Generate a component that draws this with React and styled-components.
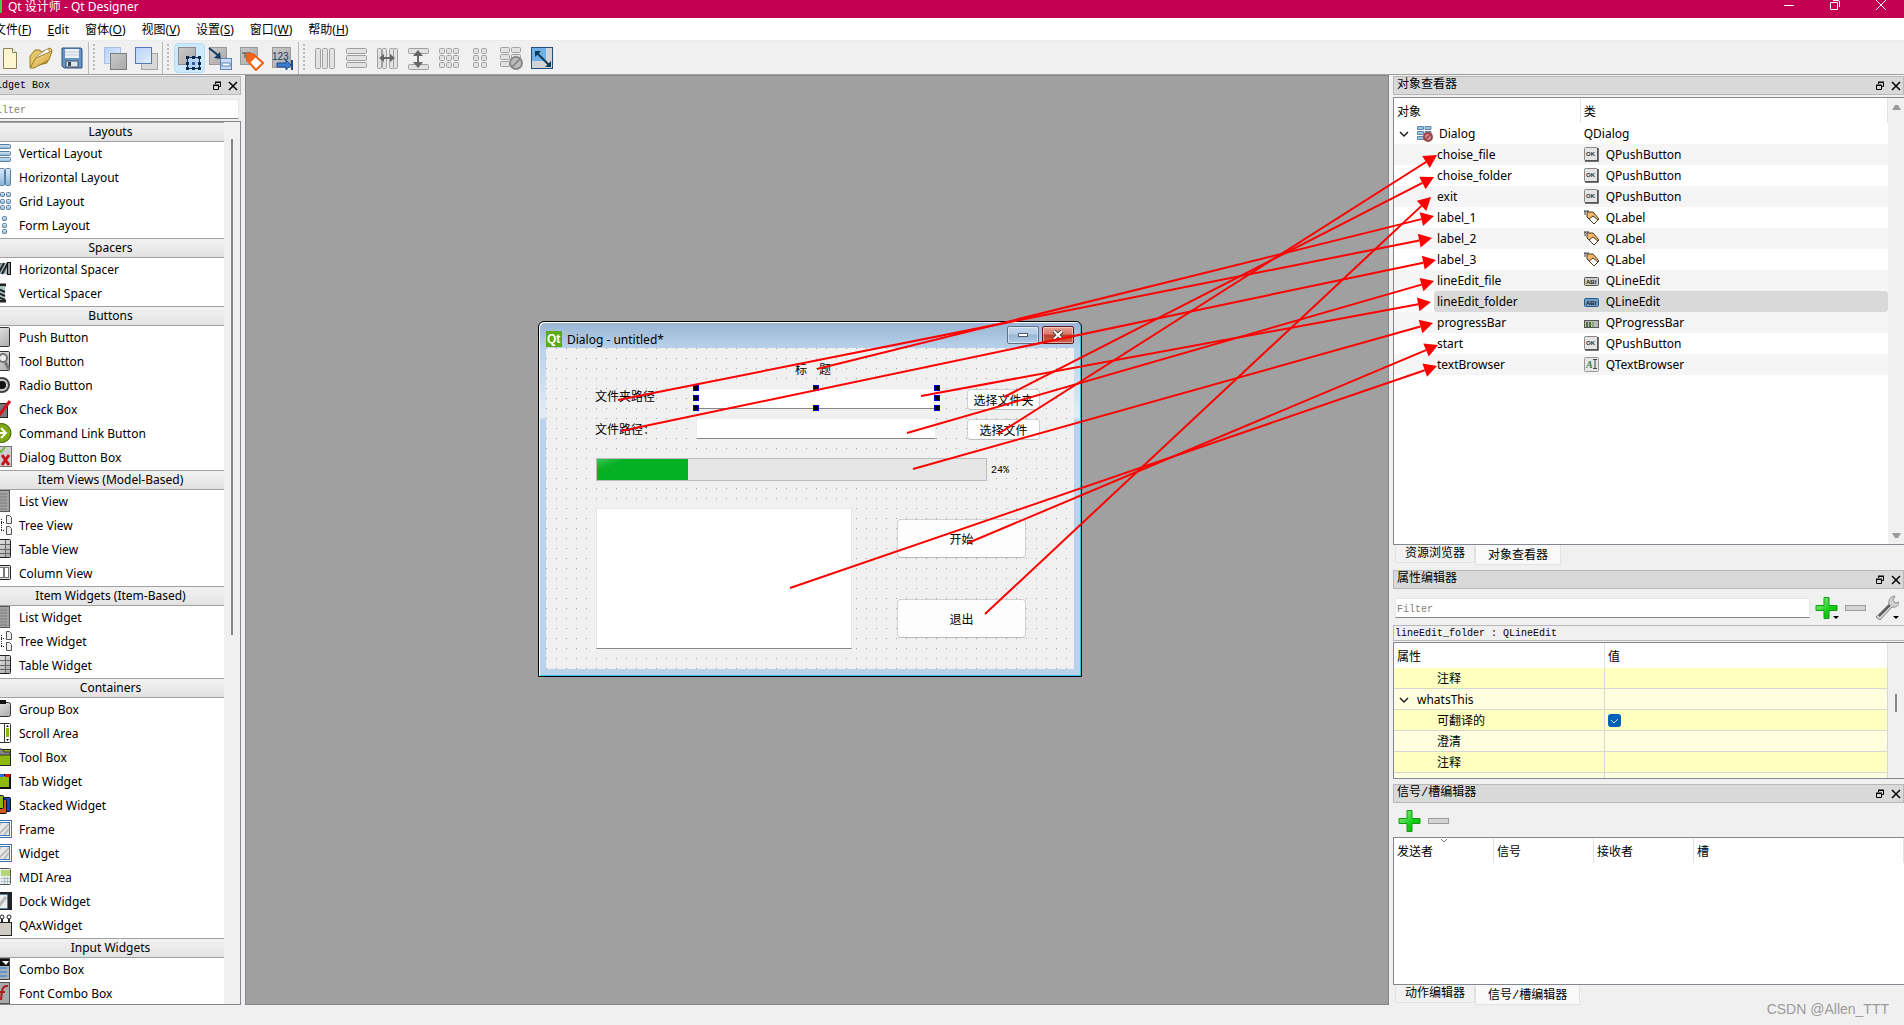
import React, { useState } from 'react';
import styled, { createGlobalStyle, css } from 'styled-components';

const GlobalStyle = createGlobalStyle`
  * {
    box-sizing: border-box;
  }

  body {
    margin: 0;
    background-color: #f0f0f0;
    color: #000;
    font-family: "Noto Sans", "Noto Sans CJK SC", sans-serif;
    font-size: 12px;
    overflow: hidden;
  }

  button, input {
    font-family: inherit;
    font-size: inherit;
    color: inherit;
  }
`;

const mono = css`
  font-family: "Liberation Mono", "Noto Sans CJK SC", monospace;
`;

const Screen = styled.div`
  position: relative;
  height: 100vh;
  overflow: hidden;
`;

/* The window is pushed a little past the left edge of the screen */
const MainWindow = styled.div`
  display: flex;
  flex-direction: column;
  height: 100%;
  margin-left: -12px;
`;

const TitleBar = styled.header`
  display: flex;
  justify-content: space-between;
  height: 18px;
  flex-shrink: 0;
  background-color: #c40052;
  color: #fff;
`;

const WindowTitle = styled.div`
  display: flex;
  gap: 6px;
  line-height: 14px;
`;

const WindowControls = styled.div`
  display: flex;
`;

const WindowControl = styled.button`
  width: 46px;
  height: 18px;
  padding: 0 0 8px;
  border: 0;
  background: none;
  display: flex;
  align-items: center;
  justify-content: center;
`;

const MenuBar = styled.nav`
  display: flex;
  align-items: center;
  gap: 16px;
  height: 23px;
  flex-shrink: 0;
  padding: 2px 0 0 6px;
  background-color: #fff;
  border-bottom: 1px solid #ececec;
`;

const MenuItem = styled.button`
  border: 0;
  padding: 0;
  background: none;
  line-height: 18px;
`;

const ToolBar = styled.div`
  display: flex;
  align-items: center;
  height: 34px;
  flex-shrink: 0;
  padding: 1px 0 0 7px;
  border-bottom: 1px solid #a0a0a0;
`;

const ToolButton = styled.button`
  width: 31px;
  height: 30px;
  padding: 0;
  display: flex;
  align-items: center;
  justify-content: center;
  border: 1px solid ${(p) => (p.$active ? '#b5def8' : 'transparent')};
  background-color: ${(p) => (p.$active ? '#cce8fb' : 'transparent')};
  border-radius: 4px;
`;

const ToolSeparator = styled.div`
  width: 12px;
  height: 32px;
  padding: 2px 0 2px 4px;
  border-left: 1px solid #b8b8b8;

  &::after {
    content: '';
    display: block;
    width: 2px;
    height: 28px;
    background-image: linear-gradient(#bbb 50%, transparent 50%);
    background-size: 2px 4px;
  }
`;

const Body = styled.div`
  display: flex;
  flex: 1;
  min-height: 0;
`;

const LeftDock = styled.aside`
  width: 253px;
  flex-shrink: 0;
  display: flex;
  flex-direction: column;
  padding-top: 1px;
  margin-right: 4px;
`;

const RightDock = styled.aside`
  width: 511px;
  flex-shrink: 0;
  display: flex;
  flex-direction: column;
  padding-top: 1px;
  margin-left: 4px;
`;

const MdiArea = styled.main`
  flex: 1;
  position: relative;
  min-width: 0;
  background-color: #a0a0a0;
  border: 1px solid #828790;
`;

const DockTitle = styled.div`
  display: flex;
  align-items: center;
  justify-content: space-between;
  height: 19px;
  flex-shrink: 0;
  padding: 0 2px 0 ${(p) => (p.$latin ? 1 : 3)}px;
  border: 1px solid #b8b8b8;
  background-color: #d9d9d9;
  ${mono}
  font-size: ${(p) => (p.$latin ? 10 : 12)}px;
  line-height: 17px;
`;

const DockButtons = styled.div`
  display: flex;
  gap: 6px;
`;

const DockButton = styled.button`
  width: 10px;
  height: 10px;
  padding: 0;
  border: 0;
  background: none;
  display: flex;
`;

const FilterInput = styled.input`
  flex: 1;
  min-width: 0;
  height: 20px;
  padding: 2px 1px 0;
  border: 1px solid #e8e8e8;
  border-bottom: 1px solid #868686;
  background-color: #fff;
  ${mono}
  font-size: 10px;
  outline: 0;

  &::placeholder {
    color: #808080;
  }
`;

const FilterRow = styled.div`
  display: flex;
  padding: 4px 2px 2px 0;
`;

const WidgetFrame = styled.div`
  display: flex;
  flex: 1;
  min-height: 0;
  border: 1px solid #828790;
  overflow: hidden;
`;

const WidgetList = styled.div`
  flex: 1;
  background-color: #fff;
`;

const CategoryTitle = styled.h2`
  height: 20px;
  margin: 0;
  padding-left: 8px;
  border-top: 1px solid #a0a0a0;
  border-bottom: 1px solid #a0a0a0;
  background: linear-gradient(#f2f2f2, #e2e2e2);
  font-size: 12px;
  font-weight: 400;
  line-height: 18px;
  text-align: center;
`;

const WidgetItem = styled.div`
  display: flex;
  align-items: center;
  gap: 6px;
  height: 24px;
  padding-bottom: 2px;
`;

const ScrollTrack = styled.div`
  width: 16px;
  flex-shrink: 0;
  display: flex;
  justify-content: center;
  padding: ${(p) => (p.$top ? p.$top : 0)}px 0;
  background-color: #f0f0f0;
`;

const ScrollThumb = styled.div`
  width: 2px;
  height: ${(p) => p.$height};
  background-color: #868686;
`;

const ScrollArrows = styled(ScrollTrack)`
  flex-direction: column;
  justify-content: space-between;
  align-items: center;
  padding: 6px 0 5px;
`;

const Frame = styled.div`
  display: flex;
  align-items: stretch;
  flex: ${(p) => (p.$height ? 'none' : '1')};
  height: ${(p) => (p.$height ? p.$height + 'px' : 'auto')};
  min-height: 0;
  margin-top: ${(p) => p.$gap || 0}px;
  border: 1px solid #828790;
  border-right: 0;
  background-color: #fff;
  overflow: hidden;
`;

const TableArea = styled.div`
  flex: 1;
  min-width: 0;
`;

const Table = styled.table`
  width: 100%;
  table-layout: fixed;
  border-collapse: separate;
  border-spacing: 0;

  th {
    height: 25px;
    padding: 0 0 0 3px;
    border-right: 1px solid #e2e2e2;
    background-color: #fff;
    font-weight: 400;
    text-align: left;
    position: relative;
  }

  td {
    height: 21px;
    padding: 0;
    white-space: nowrap;
    line-height: 20px;
  }
`;

const ObjectRow = styled.tr`
  background-color: ${(p) => (p.$odd ? '#f5f5f5' : '#fff')};
`;

const ObjectName = styled.div`
  display: flex;
  align-items: center;
  height: 21px;
  margin-left: ${(p) => (p.$root ? 5 : 40)}px;
  padding-left: ${(p) => (p.$root ? 0 : 3)}px;
  gap: 6px;
  border-radius: 3px 0 0 3px;
  background-color: ${(p) => (p.$selected ? '#d9d9d9' : 'transparent')};
`;

const ClassName = styled.div`
  display: flex;
  align-items: center;
  gap: 7px;
  height: 21px;
  padding-left: 3px;
  border-radius: 0 3px 3px 0;
  background-color: ${(p) => (p.$selected ? '#d9d9d9' : 'transparent')};
`;

const Expander = styled.button`
  width: 10px;
  height: 10px;
  padding: 0;
  border: 0;
  background: none;
  display: flex;
  margin-right: ${(p) => p.$gap || 0}px;
`;

const PropertyRow = styled.tr`
  background-color: ${(p) => (p.$strong ? '#ffffbf' : '#ffffdf')};

  td {
    border-right: 1px solid #d6d6d6;
    border-bottom: 1px solid #d6d6d6;
  }
`;

const PropertyName = styled.div`
  display: flex;
  align-items: center;
  height: 20px;
  padding-top: 2px;
  padding-left: ${(p) => (p.$group ? 5 : 43)}px;
`;

const CheckHolder = styled.label`
  display: grid;
  justify-content: start;
  padding-left: 3px;

  > * {
    grid-area: 1 / 1;
  }

  svg {
    z-index: 1;
    pointer-events: none;
  }
`;

const CheckBox = styled.input`
  appearance: none;
  display: block;
  width: 13px;
  height: 13px;
  margin: 0;
  border-radius: 3px;
  background-color: #e5e5e5;

  &:checked {
    background-color: #005fb8;
  }
`;

const Tabs = styled.div`
  display: flex;
  align-items: flex-start;
  height: 20px;
  flex-shrink: 0;
  padding-left: 2px;
`;

const Tab = styled.button`
  height: ${(p) => (p.$active ? 20 : 18)}px;
  padding: ${(p) => (p.$active ? '3px 12px 0' : '2px 9px 0')};
  border: 1px solid #e2e2e2;
  border-top: 0;
  background-color: ${(p) => (p.$active ? '#f9f9f9' : '#f2f2f2')};
  ${mono}
  line-height: 15px;
`;

const PropertyTools = styled.div`
  display: flex;
  align-items: center;
  gap: 4px;
  height: 36px;
  padding: 2px 2px 0;
  flex-shrink: 0;
`;

const SignalTools = styled.div`
  display: flex;
  align-items: center;
  gap: 5px;
  height: 34px;
  padding: 2px 0 0 5px;
  flex-shrink: 0;
`;

const IconButton = styled.button`
  width: ${(p) => p.$width || 24}px;
  height: 24px;
  padding: 0;
  border: 0;
  background: none;
  display: flex;
  align-items: center;
  justify-content: center;
`;

const ObjectLabel = styled.div`
  height: 16px;
  flex-shrink: 0;
  padding: 1px 0 0 1px;
  border: 1px solid #b8b8b8;
  border-right: 0;
  ${mono}
  font-size: 10px;
  line-height: 14px;
`;

const DockGap = styled.div`
  height: 5px;
  flex-shrink: 0;
`;

const StatusBar = styled.footer`
  height: 20px;
  flex-shrink: 0;
`;

const Watermark = styled.div`
  position: absolute;
  right: 15px;
  bottom: 6px;
  color: #9b9b9b;
  font-family: "Liberation Sans", Arial, sans-serif;
  font-size: 14px;
  line-height: 20px;
`;

/* Form window on the design canvas */
const FormWindow = styled.section`
  position: absolute;
  left: 292px;
  top: 245px;
  width: 544px;
  border: 1px solid #000;
  border-radius: 6px 6px 0 0;
  background: linear-gradient(#98b4d2, #b9d1ea 26px, #e2ecf7 95px, #b9d1ea 98px);
  box-shadow: inset 1px 1px 0 #fff, inset -1px -1px 0 #34c6e0;
  padding: 0 7px 7px;
`;

const FormTitle = styled.div`
  display: flex;
  align-items: center;
  height: 26px;
  padding-top: 8px;
  gap: 5px;
`;

const FormTitleButtons = styled.div`
  display: flex;
  gap: 3px;
  margin-left: auto;
  margin-top: -8px;
`;

const FormTitleButton = styled.button`
  width: 32px;
  height: 18px;
  padding: 0;
  display: flex;
  align-items: center;
  justify-content: center;
  border: 1px solid ${(p) => (p.$close ? '#5e1a1a' : '#5c7089')};
  border-radius: 2px;
  background: ${(p) =>
    p.$close
      ? 'linear-gradient(#e8a196, #d8796b 45%, #bb3c26 50%, #cc6450)'
      : 'linear-gradient(#c3d6ea, #b3cae3 45%, #97b5d4 50%, #b4cde6)'};
  box-shadow: inset 0 0 0 1px rgba(255, 255, 255, 0.45);
`;

const FormCanvas = styled.div`
  position: relative;
  height: 321px;
  background-color: #f0f0f0;
  background-image: conic-gradient(at 1px 1px, transparent 75%, #a0a0a4 0);
  background-size: 10px 10px;
`;

const place = css`
  position: absolute;
  left: ${(p) => p.$x}px;
  top: ${(p) => p.$y}px;
  width: ${(p) => (p.$w ? p.$w + 'px' : 'auto')};
  height: ${(p) => (p.$h ? p.$h + 'px' : 'auto')};
`;

const FormLabel = styled.label`
  ${place}
  ${mono}
  line-height: 20px;
  white-space: pre;
`;

const FormInput = styled.input`
  ${place}
  padding: 0 4px;
  border: 1px solid #ececec;
  border-bottom: 1px solid #868686;
  background-color: #fff;
`;

const FormText = styled.textarea`
  ${place}
  resize: none;
  border: 1px solid #e6e6e6;
  border-bottom: 1px solid #868686;
  background-color: #fff;
`;

const FormButton = styled.button`
  ${place}
  ${mono}
  padding: 0;
  border: 1px solid #d0d0d0;
  border-bottom-color: #bcbcbc;
  border-radius: 4px;
  background-color: #fdfdfd;
  white-space: nowrap;
`;

const ProgressTrack = styled.div`
  ${place}
  border: 1px solid #bcbcbc;
  background-color: #e6e6e6;
`;

const ProgressChunk = styled.div`
  height: 100%;
  background: linear-gradient(160deg, #3cc453, #06b025 22%);
`;

const ProgressText = styled.span`
  ${place}
  ${mono}
  font-size: 10px;
  line-height: 20px;
`;

const Handle = styled.i`
  ${place}
  width: 6px;
  height: 6px;
  border: 1px solid #0000c8;
  background-color: #000;
`;

const ArrowLayer = styled.svg`
  position: absolute;
  left: 0;
  top: 0;
  pointer-events: none;
`;

const HeaderMark = styled.svg`
  position: absolute;
  left: 46px;
  top: 1px;
`;

const HiddenDefs = styled.svg`
  position: absolute;
  width: 0;
  height: 0;
`;

const Defs = () => (
  <HiddenDefs aria-hidden="true">
    <defs>
      <linearGradient id="grey" x1="0" y1="0" x2="1" y2="1">
        <stop offset="0" stopColor="#f2f2f2" />
        <stop offset="1" stopColor="#a9a9a9" />
      </linearGradient>
      <linearGradient id="tile" x1="0" y1="0" x2="1" y2="1">
        <stop offset="0" stopColor="#c9c9c9" />
        <stop offset="1" stopColor="#a9a9a9" />
      </linearGradient>
      <linearGradient id="blue" x1="0" y1="0" x2="1" y2="1">
        <stop offset="0" stopColor="#b4d2fb" />
        <stop offset="1" stopColor="#e3eefd" />
      </linearGradient>
      <linearGradient id="bar" x1="0" y1="0" x2="0" y2="1">
        <stop offset="0" stopColor="#d9ecfa" />
        <stop offset="1" stopColor="#87b3d8" />
      </linearGradient>
      <linearGradient id="green" x1="0" y1="0" x2="1" y2="1">
        <stop offset="0" stopColor="#9cf39c" />
        <stop offset="0.6" stopColor="#12cf12" />
        <stop offset="1" stopColor="#05b505" />
      </linearGradient>
      <linearGradient id="gold" x1="0" y1="0" x2="1" y2="1">
        <stop offset="0" stopColor="#fae8a8" />
        <stop offset="1" stopColor="#cf9a28" />
      </linearGradient>
    </defs>
  </HiddenDefs>
);

const ToolIcon = ({ name }) => {
  const bar = { fill: '#e2e2e2', stroke: '#a0a0a0' };
  const shapes = {
    new: (
      <>
        <path d="M5.500 2.500h9l4 4v16h-13z" fill="#fdf8cf" stroke="#8d8158" />
        <path d="M14.500 2.500v4h4" fill="#fff" stroke="#8d8158" />
      </>
    ),
    open: (
      <>
        <path d="M1 21V10l5-6h5l1 2 9-4 2 2-5 13z" fill="#e5c566" stroke="#9c7a22" />
        <path d="M6 12L18 3l3 3-7 9z" fill="#fff" stroke="#aaa" />
        <path d="M1 22L7 12l16-7-3 9L5 22z" fill="url(#gold)" stroke="#9c7a22" />
      </>
    ),
    save: (
      <>
        <path d="M2 2h19l1 1v19H4l-2-2z" fill="#6794c6" stroke="#33557e" />
        <rect x="5" y="3" width="14" height="9" fill="#edf1f6" />
        <path d="M5 6h14M5 9h14" stroke="#c2cfdd" />
        <rect x="6" y="15" width="12" height="6" fill="#dfe5ec" stroke="#456" />
        <rect x="8" y="16" width="3" height="4" fill="#345" />
      </>
    ),
    back: (
      <>
        <rect x="1.500" y="1.500" width="16" height="16" fill="url(#blue)" stroke="#aebfdd" />
        <rect x="7.500" y="7.500" width="16" height="16" fill="url(#tile)" stroke="#7d7d7d" />
      </>
    ),
    front: (
      <>
        <rect x="7.500" y="7.500" width="16" height="16" fill="#d8d8d8" stroke="#a6a6a6" />
        <rect x="1.500" y="1.500" width="16" height="16" fill="url(#blue)" stroke="#5577b5" />
      </>
    ),
    widgets: (
      <>
        <rect x="1.500" y="1.500" width="17" height="17" fill="url(#tile)" stroke="#8c8c8c" />
        <rect x="10.500" y="11.500" width="12" height="11" fill="#b4d2fb" stroke="#14355e" />
        <path d="M9 10h3v3H9zM15 10h3v3h-3zM21 10h3v3h-3zM9 16h3v3H9zM21 16h3v3h-3zM9 21h3v3H9zM15 21h3v3h-3zM21 21h3v3h-3z" fill="#0c2647" />
        <rect x="15" y="16" width="3" height="3" fill="#2d5fa3" />
      </>
    ),
    signals: (
      <>
        <rect x="1.500" y="1.500" width="17" height="17" fill="url(#tile)" stroke="#9a9a9a" />
        <path d="M1 2l10 8" stroke="#173c5d" strokeWidth="2" />
        <path d="M13 13l-1-7-6 6z" fill="#173c5d" />
        <rect x="12.500" y="12.500" width="11" height="11" fill="#c9dcf5" stroke="#5d83b9" />
        <rect x="14" y="17" width="8" height="3" fill="#fff" stroke="#5d83b9" />
      </>
    ),
    buddies: (
      <>
        <rect x="1.500" y="1.500" width="17" height="17" fill="url(#tile)" stroke="#9a9a9a" />
        <path d="M3 7h9M6 7v5" stroke="#444" />
        <path d="M8 8h6l10 9-7 7-9-10z" fill="#fff" stroke="#ee5f14" strokeWidth="2" />
        <path d="M8 8h6l3 3-6 6-3-3z" fill="#f0661c" />
      </>
    ),
    order: (
      <>
        <rect x="2.500" y="1.500" width="18" height="20" fill="url(#tile)" stroke="#9a9a9a" />
        <text x="2" y="14" fontSize="10" fontFamily="Liberation Sans" fill="#153a66">123</text>
        <path d="M7 17h9v-3l5 5-5 5v-3H7z" fill="#3c7fd0" stroke="#1c4c8d" />
        <rect x="21" y="14" width="2" height="10" fill="#1c4c8d" />
      </>
    ),
    hlayout: [2, 9, 16].map((x) => <rect key={x} x={x + 0.5} y="2.500" width="5" height="20" rx="1" {...bar} />),
    vlayout: [2, 9, 16].map((y) => <rect key={y} x="2.500" y={y + 0.5} width="20" height="5" rx="1" {...bar} />),
    hsplit: (
      <>
        {[2, 7, 14, 18].map((x) => (
          <rect key={x} x={x + 0.5} y="2.500" width="4" height="20" rx="1" {...bar} />
        ))}
        <path d="M4 12l5-4v3h6V8l5 4-5 4v-3H9v3z" fill="#666" />
      </>
    ),
    vsplit: (
      <>
        <rect x="2.500" y="2.500" width="20" height="5" rx="1" {...bar} />
        <rect x="2.500" y="18.500" width="20" height="5" rx="1" {...bar} />
        <path d="M12 4l5 6h-4v6h4l-5 6-5-6h4v-6H7z" fill="#666" />
      </>
    ),
    grid: [2, 9, 16].map((y) =>
      [2, 9, 16].map((x) => <rect key={x + '-' + y} x={x + 0.5} y={y + 0.5} width="5" height="5" rx="1" {...bar} />)
    ),
    form: [2, 9, 16].map((y) =>
      [5, 13].map((x) => <rect key={x + '-' + y} x={x + 0.5} y={y + 0.5} width="5" height="5" rx="1" {...bar} />)
    ),
    broken: (
      <>
        {[1, 8, 15].map((y) => (
          <React.Fragment key={y}>
            <rect x="1.500" y={y + 0.5} width="9" height="5" rx="1" {...bar} />
            <rect x="12.500" y={y + 0.5} width="9" height="5" rx="1" {...bar} />
          </React.Fragment>
        ))}
        <circle cx="17" cy="17" r="6" fill="#bdbdbd" stroke="#8a8a8a" strokeWidth="2" />
        <path d="M13 21l8-8" stroke="#8a8a8a" strokeWidth="2" />
      </>
    ),
    adjust: (
      <>
        <rect x="1.500" y="1.500" width="21" height="21" fill="#d3d3d3" stroke="#1d4f80" />
        <rect x="2" y="2" width="14" height="13" fill="#6fb0e6" />
        <path d="M7 7l12 12" stroke="#0d3a55" strokeWidth="2" />
        <path d="M5 5h6l-6 6zM21 21h-6l6-6z" fill="#0d3a55" />
      </>
    ),
  };
  return (
    <svg width="25" height="25" viewBox="0 0 25 25" fill="none" aria-hidden="true">
      {shapes[name]}
    </svg>
  );
};

const WidgetIcon = ({ name }) => {
  const bar = { fill: 'url(#bar)', stroke: '#5d7f9f' };
  const box = <rect x="1.500" y="1.500" width="19" height="19" rx="1" fill="url(#grey)" stroke="#333" />;
  const stripes = (
    <>
      <rect x="1.500" y="2.500" width="21" height="17" fill="#fff" stroke="#3a76bb" />
      <rect x="3.500" y="4.500" width="17" height="13" fill="#e9e9e9" stroke="#3a76bb" />
      <path d="M9 17L20 6M15 17l5-6M5 12l7-7" stroke="#bcbcbc" strokeWidth="2" />
    </>
  );
  const list = (
    <>
      <rect x="1.500" y="0.500" width="19" height="21" fill="#a3a3a3" stroke="#555" />
      <path d="M3 4h15M3 7h15M3 10h15M3 13h15M3 16h15M3 19h15" stroke="#7b7b7b" />
    </>
  );
  const tree = (
    <>
      <path d="M3 3h6M12.500 5v12M12 8.500h4M12 16.500h4" stroke="#222" strokeDasharray="1 1" />
      <path d="M17.500 1.500h3l2 2v6h-5zM17.500 12.500h3l2 2v6h-5z" fill="#eee" stroke="#555" />
    </>
  );
  const table = (
    <>
      <rect x="1.500" y="1.500" width="20" height="18" rx="1" fill="url(#grey)" stroke="#222" />
      <path d="M2 6.500h19M2 11.500h19M2 15.500h19M8.500 2v17M16.500 2v17" stroke="#666" />
    </>
  );
  const shapes = {
    vbox: [2, 9, 15].map((y) => <rect key={y} x="1.500" y={y + 0.5} width="20" height="4" rx="1" {...bar} />),
    hbox: [2, 10, 16].map((x) => <rect key={x} x={x + 0.5} y="2.500" width="5" height="17" rx="1" {...bar} />),
    grid: [2, 9, 15].map((y) => [5, 11, 17].map((x) => <rect key={x + '-' + y} x={x + 0.5} y={y + 0.5} width="4" height="4" rx="1" {...bar} />)),
    form: [2, 9, 15].map((y) => [4, 13].map((x) => <rect key={x + '-' + y} x={x + 0.5} y={y + 0.5} width="4" height="4" rx="1" {...bar} />)),
    hspacer: (
      <>
        <rect x="2" y="5" width="17" height="11" fill="#9fb4bd" />
        <path d="M5 16l6-11M9 16l6-11M13 16l6-11" stroke="#222" strokeWidth="2" />
        <rect x="18.500" y="4.500" width="3" height="12" fill="#999" stroke="#111" />
      </>
    ),
    vspacer: (
      <>
        <path d="M5 3h12M5 19h12" stroke="#222" strokeWidth="3" />
        <rect x="7" y="4" width="9" height="14" fill="#a9c4c1" />
        <path d="M7 6l9 4M7 10l9 4M7 14l9 4" stroke="#222" strokeWidth="2" />
      </>
    ),
    push: (
      <>
        {box}
        <text x="8" y="13" fontSize="8" fontFamily="Liberation Sans">OK</text>
      </>
    ),
    tool: (
      <>
        {box}
        <circle cx="14" cy="8" r="4" fill="#eee" stroke="#777" strokeWidth="2" />
        <path d="M16 12l4 7" stroke="#777" strokeWidth="3" />
      </>
    ),
    radio: (
      <>
        <circle cx="13" cy="11" r="7" fill="#ccc" stroke="#444" strokeWidth="2" />
        <circle cx="13" cy="11" r="4" fill="#111" />
      </>
    ),
    check: (
      <>
        <rect x="3.500" y="5.500" width="15" height="14" fill="#777" stroke="#222" />
        <path d="M6 12l5 4L21 3" stroke="#d3131c" strokeWidth="3" />
      </>
    ),
    command: (
      <>
        <circle cx="12.500" cy="11" r="9.500" fill="#7fa810" stroke="#3d5c00" />
        <path d="M8 11h9M12 6l5 5-5 5" stroke="#fff" strokeWidth="2" />
      </>
    ),
    dialog: (
      <>
        <rect x="1.500" y="0.500" width="21" height="20" fill="#cfcfcf" stroke="#777" />
        <path d="M9 3l3 3 4-5" stroke="#6dbb3b" strokeWidth="2" />
        <path d="M13 9l7 10M20 9l-7 10" stroke="#c9131c" strokeWidth="3" />
      </>
    ),
    list,
    tree,
    table,
    column: (
      <>
        <rect x="1.500" y="3.500" width="20" height="14" rx="1" fill="#ddd" stroke="#222" />
        <rect x="10.500" y="5.500" width="4" height="10" fill="#fff" stroke="#777" />
        <rect x="15.500" y="5.500" width="4" height="10" fill="#fff" stroke="#777" />
      </>
    ),
    group: (
      <>
        <rect x="1.500" y="4.500" width="20" height="14" rx="2" fill="url(#grey)" stroke="#333" />
        <rect x="8" y="2" width="9" height="4" fill="#111" />
      </>
    ),
    scroll: (
      <>
        <rect x="1.500" y="1.500" width="20" height="19" rx="1" fill="#fff" stroke="#333" />
        <path d="M15.500 2v18" stroke="#333" />
        <rect x="17" y="6" width="3" height="9" fill="#8bb618" />
        <path d="M17 5l1.500-2L20 5M17 17l1.500 2 1.500-2" fill="#111" />
      </>
    ),
    toolbox: (
      <>
        <rect x="1.500" y="3.500" width="20" height="16" fill="#8db80e" stroke="#222" />
        <path d="M2 3h11l2 3h6v3H2z" fill="#888" stroke="#333" />
      </>
    ),
    tab: (
      <>
        <rect x="2" y="5" width="19" height="13" fill="#8db80e" stroke="#111" strokeWidth="2" />
        <rect x="10" y="4" width="5" height="3" fill="#2c6fe8" />
        <rect x="16" y="4" width="5" height="3" fill="#d91515" />
      </>
    ),
    stacked: (
      <>
        <rect x="13.500" y="3.500" width="8" height="14" rx="1" fill="#1545c4" stroke="#111" />
        <rect x="8.500" y="5.500" width="9" height="14" rx="1" fill="#d2551a" stroke="#111" />
        <rect x="3.500" y="1.500" width="11" height="13" rx="1" fill="#8db80e" stroke="#111" />
      </>
    ),
    frame: stripes,
    widget: stripes,
    mdi: (
      <>
        <rect x="2.500" y="2.500" width="19" height="16" rx="1" fill="#eee" stroke="#555" />
        <rect x="12" y="4" width="9" height="6" fill="#b2d678" />
        <path d="M12 12.500h9M12 15.500h9M15.500 11v7M18.500 11v7" stroke="#a7bccd" />
      </>
    ),
    dock: (
      <>
        <rect x="1" y="2" width="22" height="18" fill="#222" />
        <rect x="3.500" y="4.500" width="15" height="14" fill="#eee" stroke="#3a76bb" strokeDasharray="2 1" />
        <path d="M9 17l8-10" stroke="#bbb" strokeWidth="3" />
      </>
    ),
    ax: (
      <>
        <rect x="1.500" y="8.500" width="21" height="13" fill="#cfcbc5" stroke="#222" />
        <path d="M13 8V4M20 8V4" stroke="#222" strokeWidth="2" />
        <circle cx="13" cy="3" r="2" fill="#fff" stroke="#222" />
        <circle cx="20" cy="3" r="2" fill="#fff" stroke="#222" />
      </>
    ),
    combo: (
      <>
        <rect x="1.500" y="0.500" width="19" height="21" fill="#a8b0b8" stroke="#444" />
        <rect x="2" y="1" width="18" height="7" fill="#111" />
        <path d="M13 3h7l-3 4z" fill="#fff" />
        <path d="M3 10h15M3 14h15M3 18h15" stroke="#5f97d0" strokeWidth="2" />
      </>
    ),
    font: (
      <>
        <rect x="1.500" y="0.500" width="19" height="21" fill="#aaa" stroke="#555" />
        <path d="M19 4c-6-1-6 4-7 14M10 10h6" stroke="#ad1d1d" strokeWidth="2" />
      </>
    ),
  };
  return (
    <svg width="24" height="22" viewBox="0 0 24 22" fill="none" aria-hidden="true">
      {shapes[name]}
    </svg>
  );
};

const ClassIcon = ({ kind, selected }) => {
  const shapes = {
    push: (
      <>
        <rect x="0.500" y="0.500" width="13" height="13" rx="1" fill="#e4e4e4" stroke="#888" />
        <path d="M1 14h13V1" stroke="#444" strokeWidth="1.500" />
        <text x="2" y="9" fontSize="6" fontWeight="700" fontFamily="Liberation Sans" fill="#333">OK</text>
      </>
    ),
    label: (
      <>
        <path d="M3 2h6l6 7-5 5-7-7z" fill="#f3b66a" stroke="#4c3a22" />
        <path d="M9 6l5 4-4 4-5-5z" fill="#fff" stroke="#4c3a22" />
        <path d="M0 1h5M1 1v4" stroke="#333" />
      </>
    ),
    line: (
      <>
        <rect x="0.500" y="4.500" width="14" height="8" rx="1" fill={selected ? '#6d9fcc' : '#ccc'} stroke={selected ? '#2c5a88' : '#555'} />
        <text x="2" y="11" fontSize="6" fontWeight="700" fontFamily="Liberation Sans" fill="#222">ABI</text>
      </>
    ),
    progress: (
      <>
        <rect x="0.500" y="5.500" width="14" height="7" fill="#bbb" stroke="#555" />
        <path d="M3 7v5M6 7v5" stroke="#4d7338" strokeWidth="2" />
        <path d="M9 7v5" stroke="#8ca57c" strokeWidth="2" />
      </>
    ),
    text: (
      <>
        <rect x="0.500" y="0.500" width="14" height="14" rx="1" fill="#e6e6e6" stroke="#999" />
        <text x="2" y="11" fontSize="10" fontStyle="italic" fontWeight="700" fontFamily="Liberation Serif" fill="#2e8550">A</text>
        <path d="M9 2.500h4M9 11.500h4M11 3v9" stroke="#444" />
      </>
    ),
  };
  return (
    <svg width="15" height="15" viewBox="0 0 15 15" fill="none" aria-hidden="true">
      {shapes[kind]}
    </svg>
  );
};

const DialogIcon = () => (
  <svg width="16" height="16" viewBox="0 0 16 16" fill="none" aria-hidden="true">
    <path d="M0.500 0.500h6v3h-6zM8 0.500h6v3H8zM0.500 5.500h6v3h-6zM8 5.500h6v3H8zM0.500 10.500h8v3h-8z" fill="#9cc3e2" stroke="#5d86aa" />
    <circle cx="11" cy="11" r="4" fill="#c98b8f" stroke="#9c4247" strokeWidth="2" />
    <path d="M8 14l6-6" stroke="#9c4247" strokeWidth="1.500" />
  </svg>
);

const Chevron = () => (
  <svg width="10" height="10" viewBox="0 0 10 10" fill="none" aria-hidden="true">
    <path d="M1 3l4 4 4-4" stroke="#222" strokeWidth="1.500" />
  </svg>
);

const PlusIcon = ({ menu }) => (
  <svg width="24" height="24" viewBox="0 0 24 24" fill="none" aria-hidden="true">
    <path d="M9 1.500h5v8h8v5h-8v8H9v-8H1v-5h8z" fill="url(#green)" stroke="#159a15" />
    {menu && <path d="M18 20h6l-3 3z" fill="#000" />}
  </svg>
);

const MinusIcon = () => (
  <svg width="22" height="8" viewBox="0 0 22 8" fill="none" aria-hidden="true">
    <rect x="0.500" y="1.500" width="20" height="5" fill="#d4d4d4" stroke="#9d9d9d" />
  </svg>
);

const WrenchIcon = () => (
  <svg width="24" height="26" viewBox="0 0 24 26" fill="none" aria-hidden="true">
    <path d="M1 22L14 9c-1-4 2-8 6-8l-2 4 2 3 4-1c0 4-4 6-7 5L5 25z" fill="#cfcfcf" stroke="#8c8c8c" />
    <path d="M4 21L15 10" stroke="#555" strokeWidth="2" />
    <path d="M18 21h6l-3 3z" fill="#000" />
  </svg>
);

const categories = [
  { title: 'Layouts', items: [['vbox', 'Vertical Layout'], ['hbox', 'Horizontal Layout'], ['grid', 'Grid Layout'], ['form', 'Form Layout']] },
  { title: 'Spacers', items: [['hspacer', 'Horizontal Spacer'], ['vspacer', 'Vertical Spacer']] },
  {
    title: 'Buttons',
    items: [
      ['push', 'Push Button'],
      ['tool', 'Tool Button'],
      ['radio', 'Radio Button'],
      ['check', 'Check Box'],
      ['command', 'Command Link Button'],
      ['dialog', 'Dialog Button Box'],
    ],
  },
  { title: 'Item Views (Model-Based)', items: [['list', 'List View'], ['tree', 'Tree View'], ['table', 'Table View'], ['column', 'Column View']] },
  { title: 'Item Widgets (Item-Based)', items: [['list', 'List Widget'], ['tree', 'Tree Widget'], ['table', 'Table Widget']] },
  {
    title: 'Containers',
    items: [
      ['group', 'Group Box'],
      ['scroll', 'Scroll Area'],
      ['toolbox', 'Tool Box'],
      ['tab', 'Tab Widget'],
      ['stacked', 'Stacked Widget'],
      ['frame', 'Frame'],
      ['widget', 'Widget'],
      ['mdi', 'MDI Area'],
      ['dock', 'Dock Widget'],
      ['ax', 'QAxWidget'],
    ],
  },
  { title: 'Input Widgets', items: [['combo', 'Combo Box'], ['font', 'Font Combo Box']] },
];

const toolGroups = [
  ['new', 'open', 'save'],
  ['back', 'front'],
  ['widgets', 'signals', 'buddies', 'order'],
  ['hlayout', 'vlayout', 'hsplit', 'vsplit', 'grid', 'form', 'broken', 'adjust'],
];

const menus = [['文件', 'F'], ['', 'Edit'], ['窗体', 'O'], ['视图', 'V'], ['设置', 'S'], ['窗口', 'W'], ['帮助', 'H']];

const objects = [
  ['choise_file', 'QPushButton', 'push'],
  ['choise_folder', 'QPushButton', 'push'],
  ['exit', 'QPushButton', 'push'],
  ['label_1', 'QLabel', 'label'],
  ['label_2', 'QLabel', 'label'],
  ['label_3', 'QLabel', 'label'],
  ['lineEdit_file', 'QLineEdit', 'line'],
  ['lineEdit_folder', 'QLineEdit', 'line'],
  ['progressBar', 'QProgressBar', 'progress'],
  ['start', 'QPushButton', 'push'],
  ['textBrowser', 'QTextBrowser', 'text'],
];

const properties = [
  { name: '注释' },
  { name: 'whatsThis', group: true },
  { name: '可翻译的', checkable: true },
  { name: '澄清' },
  { name: '注释' },
  { name: '' },
];

// from x, from y, to x, to y
const arrows = [
  [998, 434, 1437, 155],
  [1004, 397, 1434, 177],
  [985, 614, 1431, 197],
  [817, 369, 1434, 216],
  [618, 400, 1432, 238],
  [621, 431, 1436, 260],
  [907, 433, 1434, 281],
  [921, 396, 1431, 302],
  [913, 469, 1433, 323],
  [968, 543, 1438, 345],
  [790, 588, 1437, 366],
];

const Arrow = ({ from, to }) => {
  const angle = Math.atan2(to[1] - from[1], to[0] - from[0]);
  const bx = to[0] - 13 * Math.cos(angle);
  const by = to[1] - 13 * Math.sin(angle);
  const dx = 7 * Math.sin(angle);
  const dy = 7 * Math.cos(angle);
  return (
    <g>
      <line x1={from[0]} y1={from[1]} x2={bx} y2={by} stroke="#f00" strokeWidth="2" />
      <path d={`M${to[0]} ${to[1]}L${bx + dx} ${by - dy}L${bx - dx} ${by + dy}Z`} fill="#f00" />
    </g>
  );
};

const DockHeader = ({ title, latin }) => (
  <DockTitle $latin={latin}>
    {title}
    <DockButtons>
      <DockButton aria-label="Float">
        <svg width="10" height="10" viewBox="0 0 10 10" fill="none">
          <path d="M3.500 3V1.500h5v4H7M3 1h6" stroke="#000" />
          <path d="M1.500 4.500h5v4h-5zM1 4h6" stroke="#000" />
        </svg>
      </DockButton>
      <DockButton aria-label="Close">
        <svg width="10" height="10" viewBox="0 0 10 10" fill="none">
          <path d="M1 1l8 8M9 1L1 9" stroke="#000" strokeWidth="1.500" />
        </svg>
      </DockButton>
    </DockButtons>
  </DockTitle>
);

const WidgetBox = () => (
  <LeftDock>
    <DockHeader title="Widget Box" latin />
    <FilterRow>
      <FilterInput placeholder="Filter" aria-label="Filter widgets" />
    </FilterRow>
    <WidgetFrame>
      <WidgetList>
        {categories.map((category) => (
          <div key={category.title}>
            <CategoryTitle>{category.title}</CategoryTitle>
            {category.items.map(([icon, text]) => (
              <WidgetItem key={text}>
                <WidgetIcon name={icon} />
                {text}
              </WidgetItem>
            ))}
          </div>
        ))}
      </WidgetList>
      <ScrollTrack $top={17}>
        <ScrollThumb $height="58.5%" />
      </ScrollTrack>
    </WidgetFrame>
  </LeftDock>
);

const DesignForm = () => (
  <FormWindow>
    <FormTitle>
      <svg width="16" height="16" viewBox="0 0 16 16" aria-hidden="true">
        <rect width="16" height="16" fill="#5caa15" />
        <text x="1" y="12" fontSize="12" fontWeight="700" fontFamily="Liberation Sans Narrow, Liberation Sans" fill="#fff">Qt</text>
      </svg>
      Dialog - untitled*
      <FormTitleButtons>
        <FormTitleButton aria-label="Minimize">
          <svg width="12" height="6" viewBox="0 0 12 6">
            <rect x="1.500" y="1.500" width="9" height="3" fill="#fff" stroke="#4d5b6b" />
          </svg>
        </FormTitleButton>
        <FormTitleButton $close aria-label="Close form">
          <svg width="12" height="10" viewBox="0 0 12 10" fill="none">
            <path d="M2 1l8 8M10 1L2 9" stroke="#444" strokeWidth="4" />
            <path d="M2 1l8 8M10 1L2 9" stroke="#fff" strokeWidth="2" />
          </svg>
        </FormTitleButton>
      </FormTitleButtons>
    </FormTitle>
    <FormCanvas>
      <FormLabel as="span" $x={249} $y={13}>{'标　题'}</FormLabel>
      <FormLabel htmlFor="folder" $x={49} $y={40}>文件夹路径</FormLabel>
      <FormInput id="folder" $x={150} $y={40} $w={240} $h={21} />
      <FormButton $x={421} $y={41} $w={73} $h={21}>选择文件夹</FormButton>
      <FormLabel htmlFor="file" $x={49} $y={73}>文件路径：</FormLabel>
      <FormInput id="file" $x={150} $y={70} $w={240} $h={21} />
      <FormButton $x={421} $y={71} $w={73} $h={21}>选择文件</FormButton>
      <ProgressTrack $x={50} $y={110} $w={391} $h={23} role="progressbar" aria-valuenow={24}>
        <ProgressChunk style={{ width: '23.5%' }} />
      </ProgressTrack>
      <ProgressText $x={445} $y={113}>24%</ProgressText>
      <FormText aria-label="Text browser" readOnly $x={50} $y={160} $w={256} $h={141} />
      <FormButton $x={351} $y={171} $w={129} $h={39}>开始</FormButton>
      <FormButton $x={351} $y={251} $w={129} $h={39}>退出</FormButton>
      {[37, 47, 57].map((y) =>
        [147, 267, 388].map((x) => (x === 267 && y === 47 ? null : <Handle key={x + '-' + y} $x={x} $y={y} />))
      )}
    </FormCanvas>
  </FormWindow>
);

const ObjectInspector = () => (
  <>
    <DockHeader title="对象查看器" />
    <Frame $gap={2}>
      <TableArea>
        <Table>
          <colgroup>
            <col style={{ width: '37.8%' }} />
            <col />
          </colgroup>
          <thead>
            <tr>
              <th>对象</th>
              <th>类</th>
            </tr>
          </thead>
          <tbody>
            <ObjectRow>
              <td>
                <ObjectName $root>
                  <Expander $gap={2} aria-label="Collapse Dialog"><Chevron /></Expander>
                  <DialogIcon />
                  Dialog
                </ObjectName>
              </td>
              <td><ClassName>QDialog</ClassName></td>
            </ObjectRow>
            {objects.map(([name, type, kind], i) => {
              const selected = name === 'lineEdit_folder';
              return (
                <ObjectRow key={name} $odd={i % 2 === 0}>
                  <td><ObjectName $selected={selected}>{name}</ObjectName></td>
                  <td>
                    <ClassName $selected={selected}>
                      <ClassIcon kind={kind} selected={selected} />
                      {type}
                    </ClassName>
                  </td>
                </ObjectRow>
              );
            })}
          </tbody>
        </Table>
      </TableArea>
      <ScrollArrows>
        <svg width="9" height="7" viewBox="0 0 9 7"><path d="M0 6l3-5h3l3 5z" fill="#9b9b9b" /></svg>
        <svg width="9" height="7" viewBox="0 0 9 7"><path d="M0 1h9L6 6H3z" fill="#9b9b9b" /></svg>
      </ScrollArrows>
    </Frame>
    <Tabs>
      <Tab>资源浏览器</Tab>
      <Tab $active>对象查看器</Tab>
    </Tabs>
  </>
);

const PropertyEditor = () => {
  const [translatable, setTranslatable] = useState(true);

  return (
    <>
      <DockHeader title="属性编辑器" />
      <PropertyTools>
        <FilterInput placeholder="Filter" aria-label="Filter properties" />
        <IconButton $width={26} aria-label="Add property"><PlusIcon menu /></IconButton>
        <IconButton aria-label="Remove property"><MinusIcon /></IconButton>
        <IconButton $width={30} aria-label="Configure"><WrenchIcon /></IconButton>
      </PropertyTools>
      <ObjectLabel>lineEdit_folder : QLineEdit</ObjectLabel>
      <Frame $height={137} $gap={1}>
        <TableArea>
          <Table>
            <colgroup>
              <col style={{ width: '42.7%' }} />
              <col />
            </colgroup>
            <thead>
              <tr>
                <th>属性</th>
                <th>值</th>
              </tr>
            </thead>
            <tbody>
              {properties.map((property, i) => (
                <PropertyRow key={i} $strong={i % 2 === 0}>
                  <td>
                    <PropertyName $group={property.group}>
                      {property.group && <Expander $gap={8} aria-label="Collapse whatsThis"><Chevron /></Expander>}
                      {property.name}
                    </PropertyName>
                  </td>
                  <td>
                    {property.checkable && (
                      <CheckHolder>
                        <CheckBox
                          type="checkbox"
                          aria-label="可翻译的"
                          checked={translatable}
                          onChange={(e) => setTranslatable(e.target.checked)}
                        />
                        <svg width="13" height="13" viewBox="0 0 13 13" fill="none">
                          <path d="M3 6l3 3 4-4" stroke="#cfe3f5" />
                        </svg>
                      </CheckHolder>
                    )}
                  </td>
                </PropertyRow>
              ))}
            </tbody>
          </Table>
        </TableArea>
        <ScrollTrack $top={51}>
          <ScrollThumb $height="18px" />
        </ScrollTrack>
      </Frame>
    </>
  );
};

const SignalEditor = () => (
  <>
    <DockHeader title="信号/槽编辑器" />
    <SignalTools>
      <IconButton aria-label="Add connection"><PlusIcon /></IconButton>
      <IconButton aria-label="Remove connection"><MinusIcon /></IconButton>
    </SignalTools>
    <Frame $height={148}>
      <TableArea>
        <Table>
          <colgroup>
            <col style={{ width: '100px' }} />
            <col style={{ width: '100px' }} />
            <col style={{ width: '100px' }} />
            <col />
          </colgroup>
          <thead>
            <tr>
              <th>
                发送者
                <HeaderMark width="8" height="5" viewBox="0 0 8 5" fill="none">
                  <path d="M1 0l3 3 3-3" stroke="#777" />
                </HeaderMark>
              </th>
              <th>信号</th>
              <th>接收者</th>
              <th>槽</th>
            </tr>
          </thead>
        </Table>
      </TableArea>
    </Frame>
    <Tabs>
      <Tab>动作编辑器</Tab>
      <Tab $active>信号/槽编辑器</Tab>
    </Tabs>
  </>
);

const App = () => (
  <Screen>
    <GlobalStyle />
    <Defs />
    <MainWindow>
      <TitleBar>
        <WindowTitle>
          <svg width="14" height="14" viewBox="0 0 14 14" aria-hidden="true">
            <rect width="14" height="13" fill="#41cd52" />
          </svg>
          Qt 设计师 - Qt Designer
        </WindowTitle>
        <WindowControls>
          <WindowControl aria-label="Minimize window">
            <svg width="12" height="12" viewBox="0 0 12 12"><path d="M1 6.500h10" stroke="#fff" /></svg>
          </WindowControl>
          <WindowControl aria-label="Restore window">
            <svg width="12" height="12" viewBox="0 0 12 12" fill="none">
              <path d="M1.500 3.500h7v7h-7zM4 1.500h5q1.500 0 1.500 1.500v5" stroke="#fff" />
            </svg>
          </WindowControl>
          <WindowControl aria-label="Close window">
            <svg width="12" height="12" viewBox="0 0 12 12"><path d="M1 1l10 10M11 1L1 11" stroke="#fff" /></svg>
          </WindowControl>
        </WindowControls>
      </TitleBar>
      <MenuBar>
        {menus.map(([text, key]) => (
          <MenuItem key={key}>
            {text ? <>{text}(<u>{key}</u>)</> : <><u>{key[0]}</u>{key.slice(1)}</>}
          </MenuItem>
        ))}
      </MenuBar>
      <ToolBar>
        {toolGroups.map((group, i) => (
          <React.Fragment key={i}>
            {i > 0 && <ToolSeparator />}
            {group.map((name) => (
              <ToolButton key={name} aria-label={name} $active={name === 'widgets'}>
                <ToolIcon name={name} />
              </ToolButton>
            ))}
          </React.Fragment>
        ))}
      </ToolBar>
      <Body>
        <WidgetBox />
        <MdiArea>
          <DesignForm />
        </MdiArea>
        <RightDock>
          <ObjectInspector />
          <DockGap />
          <PropertyEditor />
          <DockGap />
          <SignalEditor />
        </RightDock>
      </Body>
      <StatusBar />
    </MainWindow>
    <ArrowLayer width="100%" height="100%" aria-hidden="true">
      {arrows.map(([x1, y1, x2, y2]) => (
        <Arrow key={y2} from={[x1, y1]} to={[x2, y2]} />
      ))}
    </ArrowLayer>
    <Watermark>CSDN @Allen_TTT</Watermark>
  </Screen>
);

export default App;
